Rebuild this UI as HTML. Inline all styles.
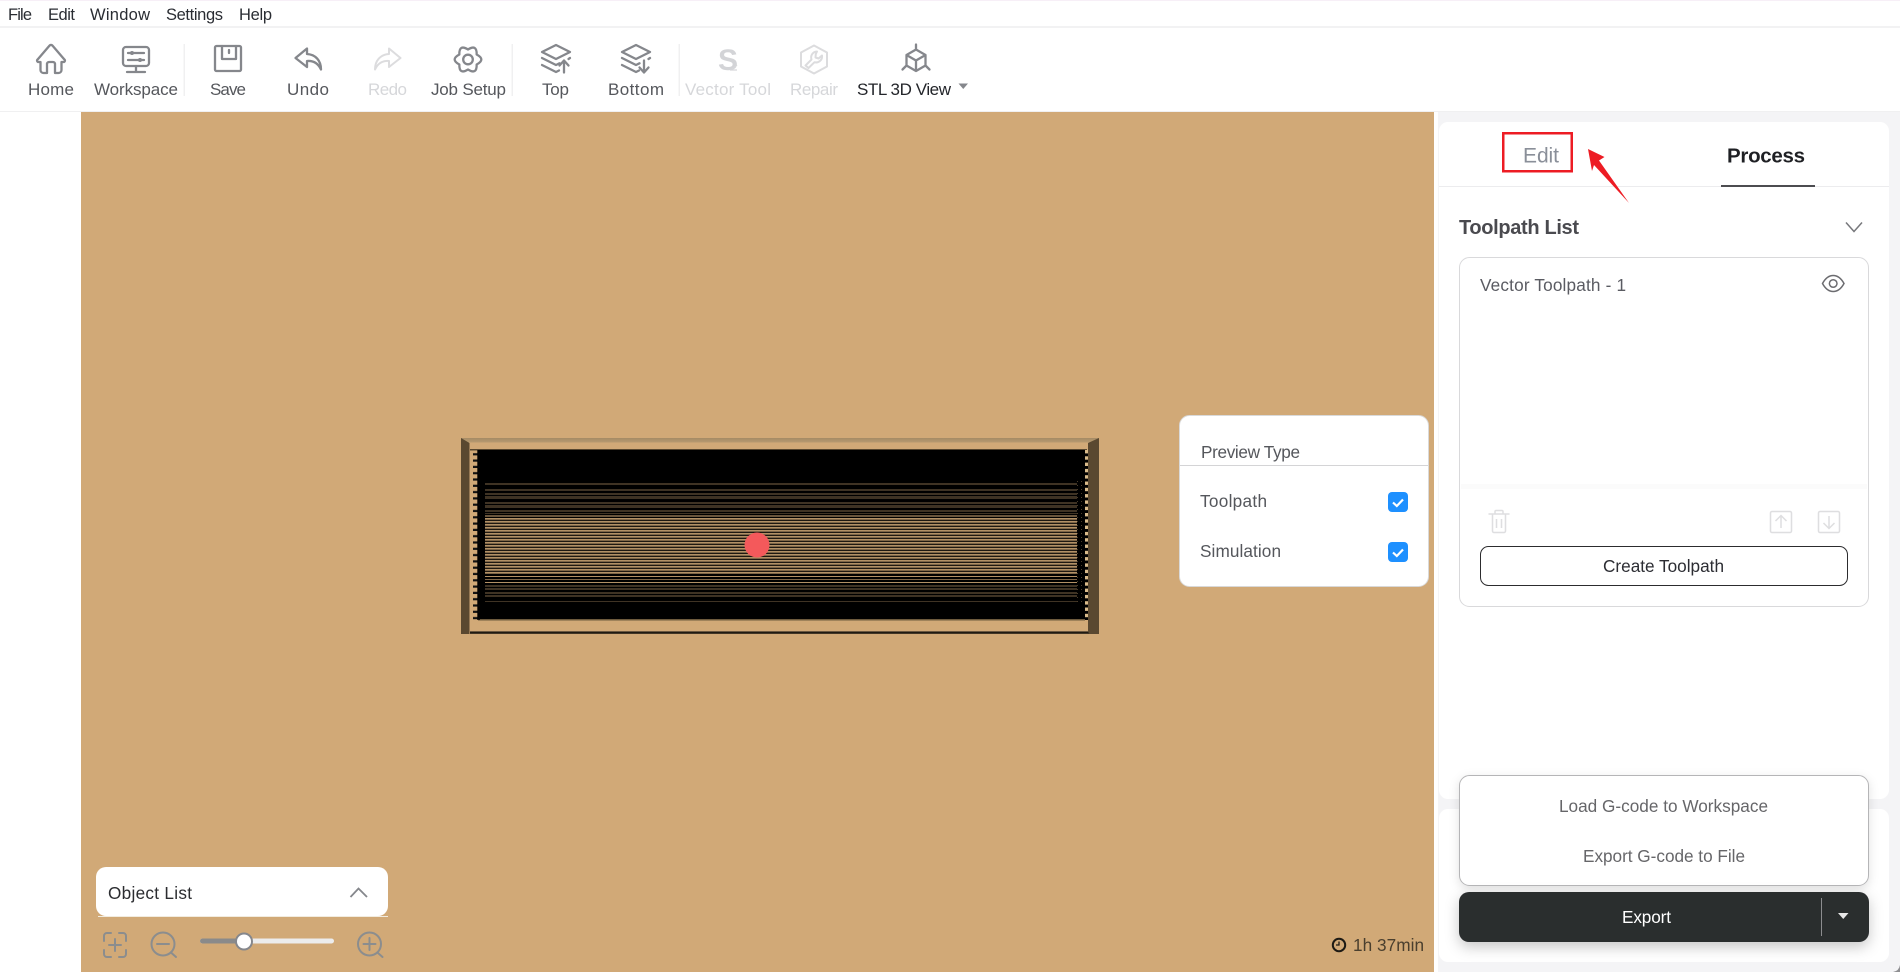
<!DOCTYPE html>
<html lang="en">
<head>
<meta charset="utf-8">
<title>Process</title>
<style>
html,body{margin:0;padding:0;width:1900px;height:972px;overflow:hidden;background:#fff}
svg{display:block}
text{font-family:"Liberation Sans",Arial,sans-serif;white-space:pre}
.m{font-size:16.5px;fill:#2a2d33}
.l{font-size:17px;fill:#5c5e66}
.d{font-size:17px;fill:#d6d7da}
.i{fill:none;stroke:#85878c;stroke-width:2.3;stroke-linecap:round;stroke-linejoin:round}
.g{fill:none;stroke:#dcdcde;stroke-width:2;stroke-linecap:round;stroke-linejoin:round}
.z{fill:none;stroke:#8b8d8e;stroke-width:2;stroke-linecap:round;stroke-linejoin:round}
.t{font-size:17px;fill:#55575c}
.p{font-size:17.2px}
</style>
</head>
<body>
<svg width="1900" height="972" viewBox="0 0 1900 972" xmlns="http://www.w3.org/2000/svg">
<defs>
<filter id="s1" x="-10%" y="-10%" width="120%" height="120%"><feDropShadow dx="0" dy="3" stdDeviation="5" flood-color="#000" flood-opacity=".12"/></filter>
<filter id="s2" x="-10%" y="-30%" width="120%" height="170%"><feDropShadow dx="0" dy="5" stdDeviation="7" flood-color="#000" flood-opacity=".22"/></filter>
<linearGradient id="tb" x1="0" y1="0" x2="0" y2="1"><stop offset="0" stop-color="#a58b65"/><stop offset="1" stop-color="#b79a70"/></linearGradient>
<pattern id="teeth" x="473" y="452" width="7" height="6.3" patternUnits="userSpaceOnUse"><rect x="0" y="1.2" width="7" height="2.2" fill="#111"/></pattern>
<pattern id="teethR" x="1085" y="450" width="3" height="6.3" patternUnits="userSpaceOnUse"><rect x="0" y="0" width="3" height="3.4" fill="#d9ba8a"/></pattern>
<pattern id="spk" x="1076" y="452" width="4" height="4" patternUnits="userSpaceOnUse"><rect x="1" y="1" width="1" height="1" fill="#4c3e2b"/></pattern>
</defs>

<!-- chrome -->
<rect width="1900" height="972" fill="#fff"/>
<rect width="1900" height="1" fill="#f7eff7"/>
<rect y="26" width="1900" height="2" fill="#f2f2f3"/>
<rect y="111" width="1900" height="1" fill="#f0f0f1"/>

<!-- menu -->
<text class="m" x="8" y="20" textLength="24" lengthAdjust="spacing">File</text>
<text class="m" x="48" y="20" textLength="27" lengthAdjust="spacing">Edit</text>
<text class="m" x="90" y="20" textLength="60" lengthAdjust="spacing">Window</text>
<text class="m" x="166" y="20" textLength="57" lengthAdjust="spacing">Settings</text>
<text class="m" x="239" y="20" textLength="33" lengthAdjust="spacing">Help</text>

<!-- toolbar dividers -->
<rect x="183.500" y="44" width="1.500" height="52" fill="#f0f0f1"/>
<rect x="511.500" y="44" width="1.500" height="52" fill="#f0f0f1"/>
<rect x="678.500" y="44" width="1.500" height="52" fill="#f0f0f1"/>

<!-- Home -->
<path class="i" d="M47 73h-3.500a3 3 0 0 1-3-3V62h-2a1.400 1.400 0 0 1-1-2.400L49.500 45.600a2 2 0 0 1 3 0L64.500 59.600a1.400 1.400 0 0 1-1 2.400h-2v8a3 3 0 0 1-3 3H55v-9a2 2 0 0 0-2-2h-4a2 2 0 0 0-2 2z"/>
<text class="t" x="28" y="95" textLength="46" lengthAdjust="spacing">Home</text>
<!-- Workspace -->
<rect class="i" x="123" y="47" width="26" height="19" rx="3"/>
<path class="i" d="M128 53h16M128 60h16M136 66v5M127 72h18" stroke-width="2"/>
<circle cx="132" cy="53" r="2" fill="#85878c"/><circle cx="140" cy="60" r="2" fill="#85878c"/>
<text class="t" x="94" y="95" textLength="84" lengthAdjust="spacing">Workspace</text>
<!-- Save -->
<rect class="i" x="215" y="46" width="26" height="25" rx="1.500"/>
<path class="i" d="M222 46v13h14V46M229 50v3" stroke-width="2"/>
<text class="t" x="210" y="95" textLength="36" lengthAdjust="spacing">Save</text>
<!-- Undo -->
<path class="i" d="M307 48.500 295.500 58 307 67v-6c6-.5 11 2 14 8.500 0-9-5.500-15-14-15.500z"/>
<text class="t" x="287" y="95" textLength="42" lengthAdjust="spacing">Undo</text>
<!-- Redo -->
<path class="g" d="M389 48.500 400.500 58 389 67v-6c-6-.5-11 2-14 8.500 0-9 5.500-15 14-15.500z"/>
<text class="d" x="368" y="95" textLength="39" lengthAdjust="spacing">Redo</text>
<!-- Job Setup -->
<path class="i" d="M476.660 54.500Q477 43.900 468 49.500 459 43.900 459.340 54.500 450 59.500 459.340 64.500 459 75.100 468 69.500 477 75.100 476.660 64.500 486 59.500 476.660 54.500Z"/>
<circle class="i" cx="468" cy="59.500" r="4.800"/>
<text class="t" x="431" y="95" textLength="75" lengthAdjust="spacing">Job Setup</text>
<!-- Top -->
<path class="i" d="M556 45 570 52 556 59 542 52ZM542 58l14 7 3.500-1.700M568.500 59l1.500-1M542 65l14 7 3-1.500" stroke-width="2.100"/>
<path class="i" d="M564 72.500V61M559.500 65.500l4.500-5 4.500 5" stroke-width="2.100"/>
<text class="t" x="542" y="95" textLength="27" lengthAdjust="spacing">Top</text>
<!-- Bottom -->
<path class="i" d="M636 45 650 52 636 59 622 52ZM622 58l14 7 3.500-1.700M648.500 59l1.500-1M622 65l14 7 3-1.500" stroke-width="2.100"/>
<path class="i" d="M644 60.500V72M639.500 67.500l4.500 5 4.500-5" stroke-width="2.100"/>
<text class="t" x="608" y="95" textLength="56" lengthAdjust="spacing">Bottom</text>
<!-- Vector Tool -->
<text x="718" y="70" font-size="30" font-weight="700" fill="#d3d4d7">S</text>
<path d="M732 69l5-4M730 70h7" stroke="#d6d7da" stroke-width="1.300" fill="none"/>
<text class="d" x="685" y="95" textLength="86" lengthAdjust="spacing">Vector Tool</text>
<!-- Repair -->
<path class="g" d="M814 45.500 827 52.500V66.500L814 73.500 801 66.500V52.500Z" stroke-width="2.200"/>
<path class="g" d="M817 51.500a6 6 0 0 0-5.500 8l-6 6 3 2.500 6-5.800a6 6 0 0 0 7.500-6.700l-3.500 3-3-1 .3-3.500z"/>
<text class="d" x="790" y="95" textLength="48" lengthAdjust="spacing">Repair</text>
<!-- STL 3D View -->
<path class="i" d="M916 49.500 925.500 55V65.500L916 71 906.500 65.500V55ZM906.500 55 916 60.500 925.500 55M916 60.500V71M916 44.500v5M902.500 69.500l4-4M929.500 69.500l-4-4" stroke-width="2"/>
<text x="857" y="95" font-size="17" fill="#23252a" textLength="94" lengthAdjust="spacing">STL 3D View</text>
<path d="M958.500 83.500h9.500l-4.750 5.500z" fill="#85878c"/>

<!-- canvas -->
<rect x="81" y="112" width="1353" height="860" fill="#d1a977"/>

<!-- 3D part -->
<rect x="461" y="438" width="638" height="4.500" fill="url(#tb)"/>
<rect x="470" y="449" width="617" height="1.500" fill="#57472f"/>
<rect x="478" y="450" width="607" height="170" fill="#000"/>
<rect x="478" y="619" width="607" height="1.500" fill="#6d5a3d"/>
<rect x="470" y="631" width="620" height="1.200" fill="#6b5840"/>
<rect x="470" y="632" width="622" height="1.800" fill="#1f1a12"/>
<path d="M461 438 469.500 443V634H461Z" fill="#5a4830"/>
<path d="M1088 443 1099 438V634H1090L1088 632Z" fill="#5a4830"/>
<!-- left teeth -->
<rect x="473" y="450" width="7" height="170" fill="url(#teeth)"/>
<rect x="477" y="450" width="3" height="170" fill="#000" opacity=".7"/>
<!-- right edge -->
<rect x="1085" y="450" width="3" height="170" fill="#000"/>
<rect x="1085" y="450" width="3" height="170" fill="url(#teethR)"/>
<rect x="1076" y="480" width="9" height="125" fill="url(#spk)"/>
<!-- stripes -->
<g stroke="#d1a977" stroke-width="1" fill="none">
<path opacity=".3" d="M485 483.500h592M485 484.500h592M485 489.500h592M485 490.500h592M485 493.500h592M485 494.500h592M485 496.500h592M485 497.500h592M485 498.500h592M485 502.500h592M485 503.500h592M485 505.500h592M485 506.500h592M485 507.500h592M485 510.500h592M485 511.500h592M485 513.500h592"/>
<path opacity=".5" d="M485 515.500h592M485 516.500h592"/>
<path opacity=".85" d="M485 518.500h592M485 521.500h592M485 524.500h592M485 527.500h592M485 530.500h592M485 533.500h592M485 536.500h592M485 539.500h592M485 542.500h592M485 545.500h592M485 548.500h592M485 551.500h592M485 554.500h592M485 557.500h592M485 560.500h592M485 563.500h592M485 566.500h592M485 569.500h592M485 572.500h592M485 576.500h592M485 582.500h592"/>
<path opacity=".6" d="M485 519.500h592M485 522.500h592M485 525.500h592M485 528.500h592M485 531.500h592M485 534.500h592M485 537.500h592M485 540.500h592M485 543.500h592M485 546.500h592M485 549.500h592M485 552.500h592M485 555.500h592M485 558.500h592M485 561.500h592M485 564.500h592M485 567.500h592M485 570.500h592M485 573.500h592M485 579.500h592"/>
<path opacity=".14" d="M485 520.500h592M485 523.500h592M485 526.500h592M485 529.500h592M485 532.500h592M485 535.500h592M485 538.500h592M485 541.500h592M485 544.500h592M485 547.500h592M485 550.500h592M485 553.500h592M485 556.500h592M485 559.500h592M485 562.500h592M485 565.500h592M485 568.500h592M485 571.500h592"/>
<path opacity=".3" d="M485 585.500h592M485 586.500h592M485 588.500h592M485 589.500h592M485 592.500h592M485 593.500h592M485 595.500h592M485 596.500h592M485 601.500h592"/>
</g>
<circle cx="757" cy="545" r="12.500" fill="#f4595b"/>

<!-- Preview panel -->
<rect x="1179.500" y="415.500" width="249" height="171" rx="10" fill="#fff" stroke="#d9d9d9"/>
<rect x="1180" y="465" width="248" height="1" fill="#d4d4d6"/>
<text class="p" x="1201" y="458" fill="#55575c" textLength="99" lengthAdjust="spacing">Preview Type</text>
<text class="p" x="1200" y="507" fill="#55575c" textLength="67" lengthAdjust="spacing">Toolpath</text>
<text class="p" x="1200" y="557" fill="#55575c" textLength="81" lengthAdjust="spacing">Simulation</text>
<rect x="1388" y="492" width="20" height="20" rx="4" fill="#1e90ff"/>
<path d="M1393 502.500l3.800 3.500 6.200-6.500" fill="none" stroke="#fff" stroke-width="2.200"/>
<rect x="1388" y="542" width="20" height="20" rx="4" fill="#1e90ff"/>
<path d="M1393 552.500l3.800 3.500 6.200-6.500" fill="none" stroke="#fff" stroke-width="2.200"/>

<!-- Object list -->
<rect x="96" y="867" width="292" height="49" rx="10" fill="#fff"/>
<rect x="98" y="916" width="290" height="1" fill="#f2ecdf"/>
<text class="p" x="108" y="899" fill="#2b2c30" textLength="84" lengthAdjust="spacing">Object List</text>
<path d="M350.500 897 358.500 888.500 367 897" fill="none" stroke="#85878c" stroke-width="1.800"/>
<!-- zoom tools -->
<path class="z" d="M104 941v-5a3 3 0 0 1 3-3h4M119 933h4a3 3 0 0 1 3 3v5M126 950v4a3 3 0 0 1-3 3h-4M111 957h-4a3 3 0 0 1-3-3v-4M115 939v12M109 945h12"/>
<circle class="z" cx="163" cy="944" r="11.500"/>
<path class="z" d="M157 944h12M171.500 953l4.500 4"/>
<rect x="200" y="938.500" width="134" height="5" rx="2.500" fill="#ececec"/>
<rect x="200" y="938.500" width="44" height="5" rx="2.500" fill="#8a8a8a"/>
<circle cx="244" cy="941.500" r="8" fill="#fff" stroke="#85878c" stroke-width="2"/>
<circle class="z" cx="369.500" cy="944" r="11.500"/>
<path class="z" d="M363.500 944h12M369.500 938v12M378 953l4.500 4"/>

<!-- time -->
<circle cx="1339" cy="945" r="6.200" fill="none" stroke="#1d1a14" stroke-width="2"/>
<path d="M1339 941.500V945h-3" fill="none" stroke="#1d1a14" stroke-width="1.300"/>
<text class="p" x="1353" y="951" fill="#4a3f2e" textLength="71" lengthAdjust="spacing">1h 37min</text>

<!-- right panel -->
<rect x="1438" y="112" width="462" height="860" fill="#f4f4f6"/>
<rect x="1439" y="122" width="450" height="677" rx="9" fill="#fff"/>
<rect x="1439" y="809" width="450" height="153" rx="9" fill="#fff"/>
<rect x="1439" y="186" width="450" height="1" fill="#ececee"/>

<text x="1523" y="162.500" font-size="21" fill="#8a8f99" textLength="36" lengthAdjust="spacing">Edit</text>
<text x="1727" y="162.500" font-size="20.500" font-weight="700" fill="#1f2024" textLength="78" lengthAdjust="spacing">Process</text>
<rect x="1721" y="185" width="94" height="2" fill="#4c4c50"/>

<!-- annotation -->
<rect x="1503.250" y="133.250" width="68.500" height="38" fill="none" stroke="#ed1c24" stroke-width="2.500"/>
<path d="M1588 149 1604.500 157 1599 160.500 1629 203 1594 165 1592 171Z" fill="#ed1c24"/>

<text x="1459" y="234" font-size="20" font-weight="700" fill="#4a4a4f" textLength="120" lengthAdjust="spacing">Toolpath List</text>
<path d="M1846 222.500 1854 231.500 1862 222.500" fill="none" stroke="#77787c" stroke-width="1.500"/>

<!-- toolpath list box -->
<rect x="1459.500" y="257.500" width="409" height="349" rx="10" fill="#fff" stroke="#d9d9db"/>
<text class="p" x="1480" y="291" fill="#5a5b62" textLength="146" lengthAdjust="spacing">Vector Toolpath - 1</text>
<path d="M1822.500 283.500c3-5.500 7-8 10.700-8s7.800 2.500 10.800 8c-3 5.500-7 8-10.800 8s-7.700-2.500-10.700-8z" fill="none" stroke="#6c6c70" stroke-width="1.500"/>
<circle cx="1833.200" cy="283.500" r="3.800" fill="none" stroke="#6c6c70" stroke-width="1.500"/>
<rect x="1461" y="484" width="406" height="5" fill="#fbfbfb"/>

<!-- footer icons -->
<path d="M1488.500 514h21M1495 514v-2.500a1 1 0 0 1 1-1h6a1 1 0 0 1 1 1v2.500M1492.500 514v17a1.500 1.500 0 0 0 1.500 1.500h10a1.500 1.500 0 0 0 1.500-1.500v-17M1496.500 519v9M1501.500 519v9" fill="none" stroke="#dedee0" stroke-width="1.500"/>
<rect x="1770.500" y="511.500" width="21" height="21" rx="1.500" fill="none" stroke="#dedee0" stroke-width="1.500"/>
<path d="M1781 528v-12.500M1775.500 521l5.500-5.500 5.500 5.500" fill="none" stroke="#dedee0" stroke-width="1.500"/>
<rect x="1818.500" y="511.500" width="21" height="21" rx="1.500" fill="none" stroke="#dedee0" stroke-width="1.500"/>
<path d="M1829 516v12.500M1823.500 523l5.500 5.500 5.500-5.500" fill="none" stroke="#dedee0" stroke-width="1.500"/>

<rect x="1480.500" y="546.500" width="367" height="39" rx="8" fill="#fff" stroke="#2c2c2e"/>
<text class="p" x="1603" y="572" fill="#2c2d33" textLength="121" lengthAdjust="spacing">Create Toolpath</text>

<!-- export menu -->
<rect x="1459.500" y="775.500" width="409" height="110" rx="10" fill="#fff" stroke="#b5b5b7" filter="url(#s1)"/>
<text class="p" x="1559" y="812" fill="#666669" textLength="209" lengthAdjust="spacing">Load G-code to Workspace</text>
<text class="p" x="1583" y="862" fill="#666669" textLength="162" lengthAdjust="spacing">Export G-code to File</text>

<!-- export button -->
<rect x="1459" y="892" width="410" height="50" rx="10" fill="#2c2d2f" filter="url(#s2)"/>
<text class="p" x="1622" y="923" fill="#fff" textLength="49" lengthAdjust="spacing">Export</text>
<rect x="1821" y="898" width="1" height="38" fill="#8c8d8f"/>
<path d="M1838 913h10.500l-5.250 6z" fill="#e8e8e8"/>

<!-- window corner -->
<path d="M1900 965q-1 6-7 7h7z" fill="#8f8f92"/>
</svg>
</body>
</html>
